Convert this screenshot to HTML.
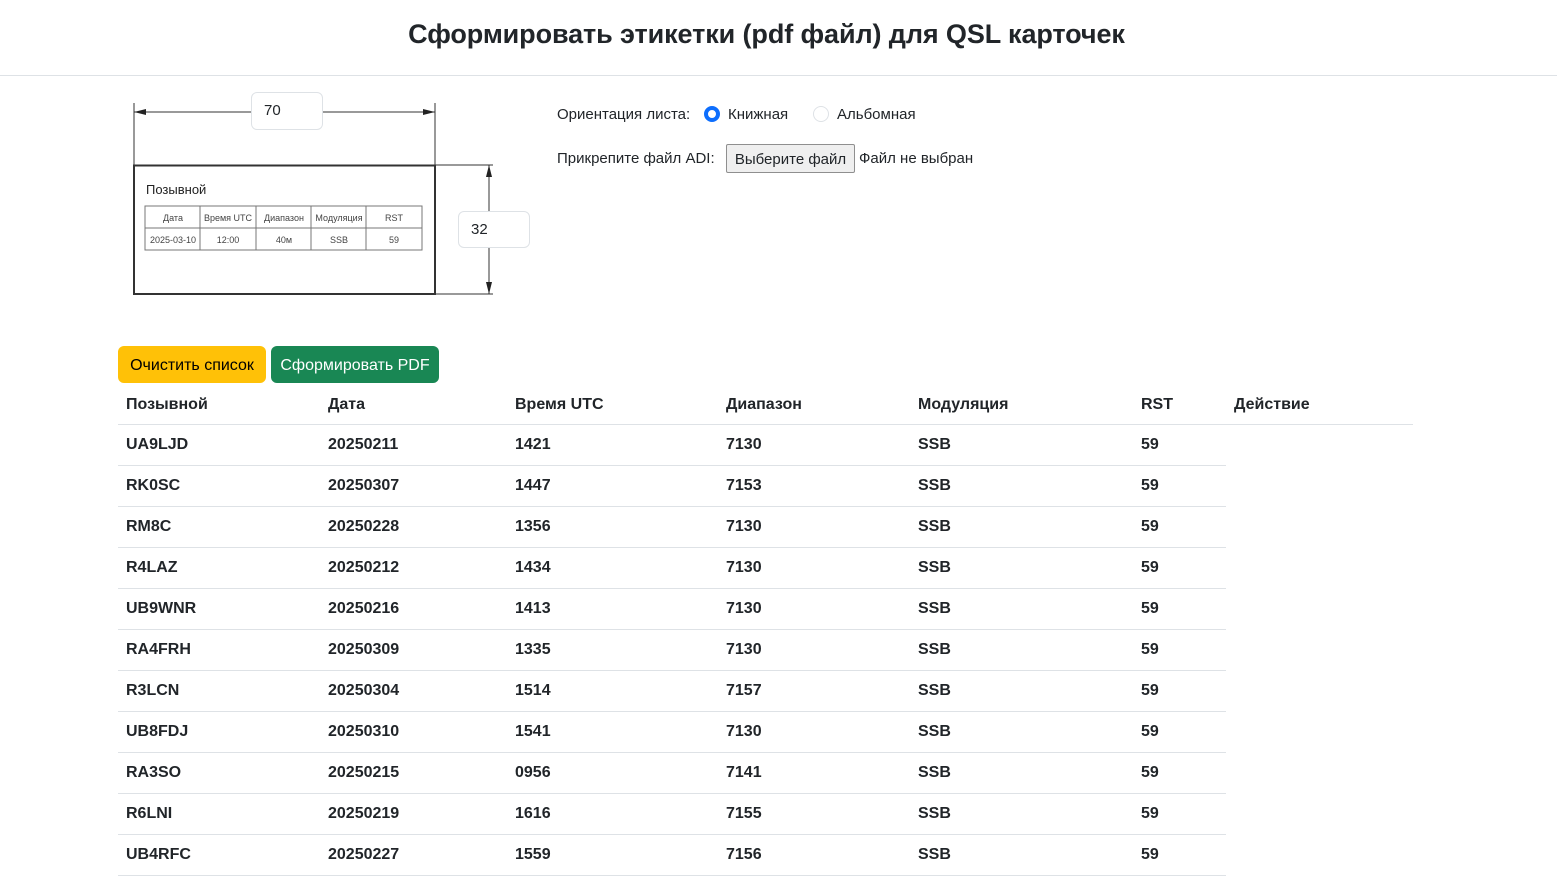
<!DOCTYPE html>
<html><head><meta charset="utf-8"><style>
body{margin:0;width:1557px;height:876px;overflow:hidden;background:#fff;font-family:"Liberation Sans","DejaVu Sans",sans-serif;color:#212529;position:relative}
h1{margin:0;position:absolute;top:19px;left:-12px;width:1557px;text-align:center;font-size:27px;font-weight:bold;color:#212529;letter-spacing:-0.1px}
.hr{position:absolute;top:75px;left:0;width:1557px;height:1px;background:#dee2e6}
.inp{position:absolute;border:1px solid #dee2e6;border-radius:6px;background:#fff;font-size:15px;padding-left:12px;box-sizing:border-box;line-height:36px}
.t{position:absolute;font-size:15px;white-space:nowrap}
.btn{position:absolute;top:346px;height:37px;border-radius:6px;font-size:16px;line-height:39px;text-align:center}
table{position:absolute;left:118px;top:386px;border-collapse:collapse;font-size:16px;font-weight:bold}
td{height:40px;padding:0 0 0 8px;border-bottom:1px solid #dee2e6;vertical-align:middle}
tr.h td{height:38px}
</style></head><body>
<h1>Сформировать этикетки (pdf файл) для QSL карточек</h1>
<div class="hr"></div>
<svg style="position:absolute;left:0;top:0" width="540" height="310">
<g stroke="#333" stroke-width="1" fill="none">
<line x1="134" y1="103" x2="134" y2="165"/><line x1="435" y1="103" x2="435" y2="165"/>
<line x1="134" y1="112" x2="251" y2="112"/><line x1="322" y1="112" x2="435" y2="112"/>
<line x1="435" y1="165" x2="493" y2="165"/><line x1="435" y1="294" x2="493" y2="294"/>
<line x1="489" y1="165" x2="489" y2="294"/>
<rect x="134" y="165.5" width="301" height="128.5" stroke-width="2"/>
<rect x="145" y="206" width="277" height="44" stroke="#777"/>
<line x1="145" y1="228" x2="422" y2="228" stroke="#777"/>
<line x1="200" y1="206" x2="200" y2="250" stroke="#777"/><line x1="256" y1="206" x2="256" y2="250" stroke="#777"/><line x1="311" y1="206" x2="311" y2="250" stroke="#777"/><line x1="366" y1="206" x2="366" y2="250" stroke="#777"/>
</g>
<g fill="#222"><path d="M134 112l12-3v6z"/><path d="M435 112l-12-3v6z"/><path d="M489 165l-3 12h6z"/><path d="M489 294l-3-12h6z"/></g>
<g font-family="Liberation Sans Narrow,Liberation Sans,sans-serif" fill="#444" font-size="9" text-anchor="middle">
<text x="146" y="194" font-size="13" text-anchor="start" fill="#222">Позывной</text>
<text x="173" y="221">Дата</text><text x="228" y="221">Время UTC</text><text x="284" y="221">Диапазон</text><text x="339" y="221">Модуляция</text><text x="394" y="221">RST</text>
<text x="173" y="243">2025-03-10</text><text x="228" y="243">12:00</text><text x="284" y="243">40м</text><text x="339" y="243">SSB</text><text x="394" y="243">59</text>
</g></svg>
<div class="inp" style="left:251px;top:92px;width:72px;height:38px">70</div>
<div class="inp" style="left:458px;top:211px;width:72px;height:37px">32</div>
<div class="t" style="left:557px;top:106px">Ориентация листа:</div>
<div style="position:absolute;left:704px;top:106px;width:8px;height:8px;border:4px solid #0d6efd;border-radius:50%;background:#fff"></div>
<div class="t" style="left:728px;top:106px">Книжная</div>
<div style="position:absolute;left:813px;top:106px;width:14px;height:14px;border:1px solid #dee2e6;border-radius:50%"></div>
<div class="t" style="left:837px;top:106px">Альбомная</div>
<div class="t" style="left:557px;top:150px">Прикрепите файл ADI:</div>
<div style="position:absolute;left:726px;top:144px;width:127px;height:27px;border:1px solid #8f8f8f;border-radius:2px;background:#efefef;font-size:15px;line-height:29px;text-align:center">Выберите файл</div>
<div class="t" style="left:859px;top:150px">Файл не выбран</div>
<div class="btn" style="left:118px;width:148px;background:#ffc107;color:#000">Очистить список</div>
<div class="btn" style="left:271px;width:168px;background:#198754;color:#fff">Сформировать PDF</div>
<table>
<tr class="h"><td style="width:194px">Позывной</td><td style="width:179px">Дата</td><td style="width:203px">Время UTC</td><td style="width:184px">Диапазон</td><td style="width:215px">Модуляция</td><td style="width:85px">RST</td><td style="width:179px">Действие</td></tr>
<tr><td>UA9LJD</td><td>20250211</td><td>1421</td><td>7130</td><td>SSB</td><td>59</td><td style="border:0"></td></tr>
<tr><td>RK0SC</td><td>20250307</td><td>1447</td><td>7153</td><td>SSB</td><td>59</td><td style="border:0"></td></tr>
<tr><td>RM8C</td><td>20250228</td><td>1356</td><td>7130</td><td>SSB</td><td>59</td><td style="border:0"></td></tr>
<tr><td>R4LAZ</td><td>20250212</td><td>1434</td><td>7130</td><td>SSB</td><td>59</td><td style="border:0"></td></tr>
<tr><td>UB9WNR</td><td>20250216</td><td>1413</td><td>7130</td><td>SSB</td><td>59</td><td style="border:0"></td></tr>
<tr><td>RA4FRH</td><td>20250309</td><td>1335</td><td>7130</td><td>SSB</td><td>59</td><td style="border:0"></td></tr>
<tr><td>R3LCN</td><td>20250304</td><td>1514</td><td>7157</td><td>SSB</td><td>59</td><td style="border:0"></td></tr>
<tr><td>UB8FDJ</td><td>20250310</td><td>1541</td><td>7130</td><td>SSB</td><td>59</td><td style="border:0"></td></tr>
<tr><td>RA3SO</td><td>20250215</td><td>0956</td><td>7141</td><td>SSB</td><td>59</td><td style="border:0"></td></tr>
<tr><td>R6LNI</td><td>20250219</td><td>1616</td><td>7155</td><td>SSB</td><td>59</td><td style="border:0"></td></tr>
<tr><td>UB4RFC</td><td>20250227</td><td>1559</td><td>7156</td><td>SSB</td><td>59</td><td style="border:0"></td></tr>
</table>
</body></html>
